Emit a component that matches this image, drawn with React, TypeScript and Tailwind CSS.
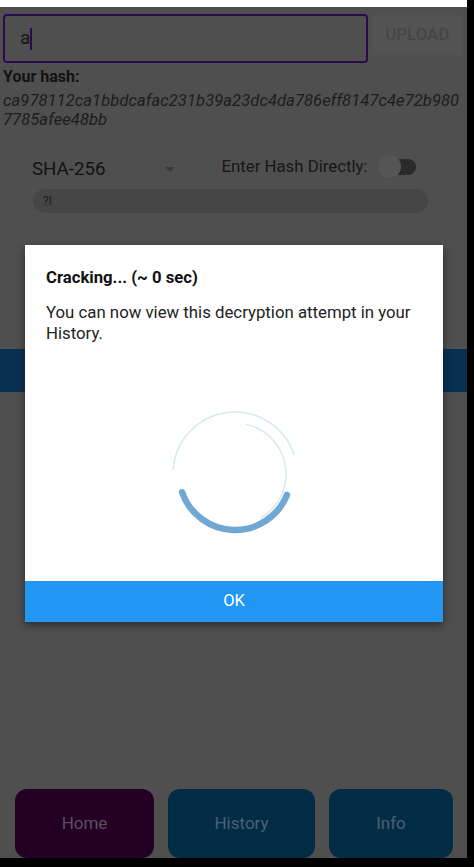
import React from 'react';

const HASH = 'ca978112ca1bbdcafac231b39a23dc4da786eff8147c4e72b9807785afee48bb';

const rad = (d: number) => (d * Math.PI) / 180;
const arc = (r: number, a: number, b: number) =>
  `M ${r * Math.cos(rad(a))} ${r * Math.sin(rad(a))} A ${r} ${r} 0 0 1 ${r * Math.cos(rad(b))} ${r * Math.sin(rad(b))}`;

const Spinner: React.FC = () => (
  <svg width="140" height="140" viewBox="-70 -70 140 140">
    {/* faint outer ring */}
    <path d={arc(62, 184, 342)} fill="none" stroke="#d3eaee" strokeWidth="1.5" />
    {/* faint inner arc */}
    <path d={arc(51, -78, 60)} fill="none" stroke="#d6ebee" strokeWidth="1.5" />
    {/* thick arc */}
    <path d={arc(56, 22, 161)} fill="none" stroke="#6fa9d3" strokeWidth="6.5" strokeLinecap="round" />
  </svg>
);

export default function App() {
  return (
    <div
      className="relative w-[474px] h-[867px] bg-black overflow-hidden"
      style={{ fontFamily: 'Roboto, "Liberation Sans", sans-serif' }}
    >
      <div className="w-[467px] h-[858px] bg-[#4f4f4f] flex flex-col">
        <div className="h-[7px] bg-white" />

        <div className="flex items-start mt-[7px] pl-[3px]">
          <div className="w-[365px] h-[49px] border-2 border-[#2b0b4e] rounded-[4px] flex items-center pl-[15px]">
            <span className="text-[19px] text-[#161616]">a</span>
            <span className="w-[2px] h-[22px] bg-[#2b0b4e]" />
          </div>
          <div className="ml-[4px] w-[91px] h-[40px] mt-[1px] bg-[#535353] flex items-center justify-center text-[16.5px] tracking-[0.3px] text-[#444444]">
            UPLOAD
          </div>
        </div>

        <div className="pl-[3px] mt-[4px] text-[16px] font-bold text-[#121212] leading-[20px]">Your hash:</div>
        <div className="pl-[3px] mt-[4px] text-[16.5px] tracking-[0.1px] italic text-[#1c1c1c] leading-[19px] whitespace-nowrap">
          {HASH.slice(0, 52)}
          <br />
          {HASH.slice(52)}
        </div>

        <div className="flex items-center mt-[27px] pl-[32px] h-[26px]">
          <span className="text-[18.7px] text-[#121212]">SHA-256</span>
          <span className="ml-[60px] w-0 h-0 border-l-[5px] border-r-[5px] border-t-[5px] border-l-transparent border-r-transparent border-t-[#3a3a3a]" />
          <span className="ml-[46px] text-[16.8px] text-[#161616] -mt-[4px]">Enter Hash Directly:</span>
          <div className="relative ml-[10px] w-[40px] h-[24px] -mt-[4px]">
            <div className="absolute left-[14px] top-[4px] w-[24px] h-[16px] rounded-full bg-[#2a2a2a]" />
            <div className="absolute left-0 top-0 w-[23px] h-[23px] rounded-full bg-[#555555]" />
          </div>
        </div>

        <div className="ml-[33px] mt-[7px] w-[395px] h-[24px] rounded-full bg-[#464646] flex items-center pl-[10px] text-[12px] text-[#1e1e1e]">
          ?I
        </div>

        <div className="mt-[136px] h-[43px] bg-[#0a3050]" />

        <div className="flex-1" />

        <div className="flex gap-[14px] pl-[15px] pr-[14px] h-[69px]">
          <div className="w-[139px] rounded-[12px] bg-[#240024] flex items-center justify-center text-[17px] text-[#5c4e62]">
            Home
          </div>
          <div className="w-[147px] rounded-[12px] bg-[#022b44] flex items-center justify-center text-[17px] text-[#4c6274]">
            History
          </div>
          <div className="w-[124px] rounded-[12px] bg-[#022b44] flex items-center justify-center text-[17px] text-[#4c6274]">
            Info
          </div>
        </div>
      </div>

      <div className="absolute left-[25px] top-[245px] w-[418px] h-[377px] bg-white flex flex-col shadow-[0_3px_8px_rgba(0,0,0,0.45)]">
        <div className="pl-[21px] pr-[20px] pt-[22px] flex-1 flex flex-col">
          <div className="text-[16.7px] font-bold text-[#111111] leading-[22px]">Cracking... (~ 0 sec)</div>
          <div className="mt-[13px] text-[16.8px] text-[#222222] leading-[21px]">
            You can now view this decryption attempt in your History.
          </div>
          <div className="flex justify-center mt-[60px]">
            <Spinner />
          </div>
        </div>
        <div className="h-[41px] bg-[#2196f3] flex items-center justify-center text-[16.5px] text-white">OK</div>
      </div>
    </div>
  );
}
